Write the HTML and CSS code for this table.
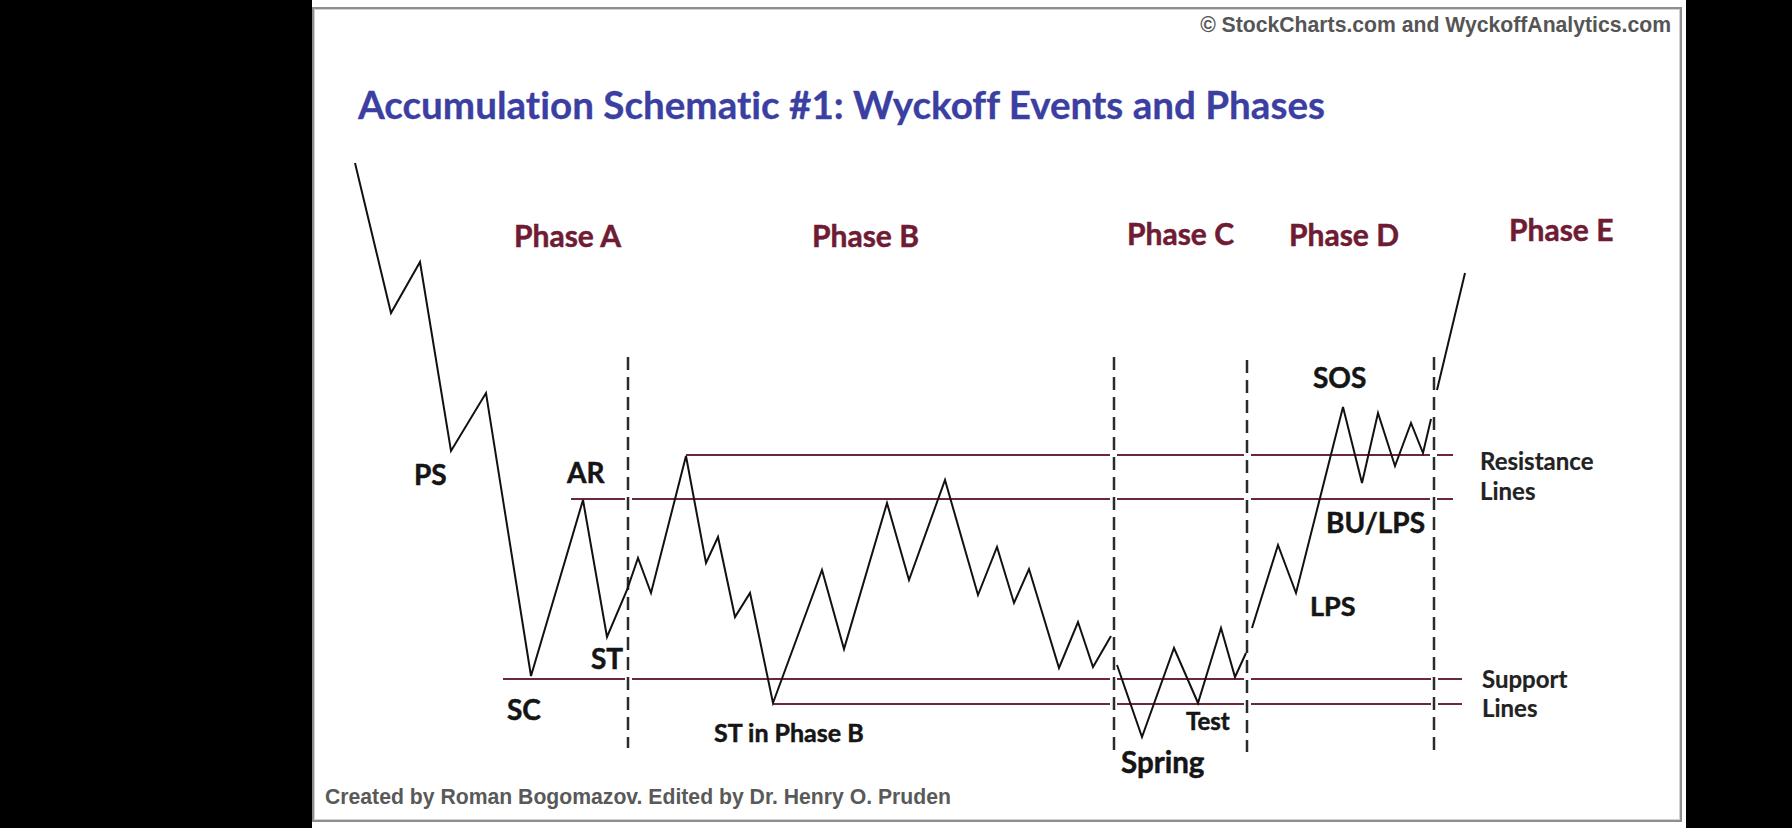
FILE: index.html
```html
<!DOCTYPE html>
<html lang="en">
<head>
<meta charset="utf-8">
<title>Accumulation Schematic #1</title>
<link rel="stylesheet" href="styles.css">
</head>
<body>
<div class="panel">
  <div class="frame">
    <div class="credit">© StockCharts.com and WyckoffAnalytics.com</div>
    <h1 class="title">Accumulation Schematic #1: Wyckoff Events and Phases</h1>
    <svg class="chart" viewBox="314 127 1366 658" width="1366" height="658" xmlns="http://www.w3.org/2000/svg">
      <g class="hline">
        <line x1="686" y1="455" x2="1110" y2="455"/>
        <line x1="1117" y1="455" x2="1244" y2="455"/>
        <line x1="1251" y1="455" x2="1430" y2="455"/>
        <line x1="1437" y1="455" x2="1453" y2="455"/>

        <line x1="571" y1="499" x2="625" y2="499"/>
        <line x1="632" y1="499" x2="1110" y2="499"/>
        <line x1="1117" y1="499" x2="1244" y2="499"/>
        <line x1="1251" y1="499" x2="1430" y2="499"/>
        <line x1="1437" y1="499" x2="1453" y2="499"/>

        <line x1="503" y1="679" x2="625" y2="679"/>
        <line x1="632" y1="679" x2="1110" y2="679"/>
        <line x1="1117" y1="679" x2="1244" y2="679"/>
        <line x1="1251" y1="679" x2="1431" y2="679"/>
        <line x1="1438" y1="679" x2="1462" y2="679"/>

        <line x1="773" y1="704" x2="1110" y2="704"/>
        <line x1="1117" y1="704" x2="1244" y2="704"/>
        <line x1="1251" y1="704" x2="1431" y2="704"/>
        <line x1="1438" y1="704" x2="1462" y2="704"/>
      </g>
      <g class="vline">
        <line x1="628" y1="357" x2="628" y2="748"/>
        <line x1="1114" y1="357" x2="1114" y2="750"/>
        <line x1="1247" y1="360" x2="1247" y2="752"/>
        <line x1="1434" y1="357" x2="1434" y2="754"/>
      </g>
      <g class="price">
        <polyline points="355,163 391,313 420,262 451,451 486,393 531,676 583,500 607,637 627,590 638,558 651,593 686,456 706,563 718,537 735,617 750,593 773,703 822,570 844,649 887,503 909,580 945,480 978,595 997,547 1014,603 1029,569 1059,668 1078,622 1093,667 1111,636"/>
        <polyline points="1117,665 1142,737 1174,648 1198,703 1221,628 1235,677 1246,653"/>
        <polyline points="1252,628 1278,545 1296,593 1343,407 1362,483 1378,413 1395,466 1411,423 1423,453 1431,419"/>
        <polyline points="1437,390 1465,273"/>
      </g>
      <g class="phase">
        <text x="514" y="247">Phase A</text>
        <text x="812" y="247">Phase B</text>
        <text x="1127" y="245">Phase C</text>
        <text x="1289" y="246">Phase D</text>
        <text x="1509" y="241">Phase E</text>
      </g>
      <g class="lbl">
        <text x="414" y="485">PS</text>
        <text x="567" y="483">AR</text>
        <text x="591" y="669">ST</text>
        <text x="507" y="720">SC</text>
        <text class="sm" x="714" y="742">ST in Phase B</text>
        <text class="lg" x="1121" y="773">Spring</text>
        <text class="xs" x="1186" y="730">Test</text>
        <text class="md" x="1310" y="616">LPS</text>
        <text x="1326" y="533">BU/LPS</text>
        <text x="1313" y="388">SOS</text>
      </g>
      <g class="side">
        <text x="1480" y="470">Resistance</text>
        <text x="1480" y="500">Lines</text>
        <text x="1482" y="688">Support</text>
        <text x="1482" y="717">Lines</text>
      </g>
    </svg>
    <div class="footer">Created by Roman Bogomazov. Edited by Dr. Henry O. Pruden</div>
  </div>
</div>
</body>
</html>
```

FILE: styles.css
```css
html, body {
  margin: 0;
  padding: 0;
  background: #000;
}

body {
  width: 1792px;
  height: 828px;
  overflow: hidden;
}

.panel {
  margin-left: 312px;
  width: 1374px;
  height: 828px;
  padding-top: 7px;
  box-sizing: border-box;
  background: #fff;
}

.frame {
  width: 1370px;
  height: 815px;
  box-sizing: border-box;
  border: 2px solid #8e8e8e;
  box-shadow: inset 0 0 0 1px #d2d2d2;
  display: flex;
  flex-direction: column;
}

.credit {
  margin-top: 4px;
  padding-right: 9px;
  height: 25px;
  text-align: right;
  font-family: "Liberation Sans", Arial, sans-serif;
  font-weight: bold;
  font-size: 21.2px;
  line-height: 24px;
  color: #555;
  white-space: nowrap;
}

.title {
  margin: 43px 0 0 44px;
  height: 46px;
  font-family: Lato, "Open Sans", sans-serif;
  font-weight: bold;
  font-size: 38.6px;
  line-height: 46px;
  color: #3b3fa2;
  white-space: nowrap;
  font-variant-ligatures: none;
  -webkit-text-stroke: 0.3px #3b3fa2;
}

.chart {
  display: block;
  flex: none;
}

.footer {
  padding-left: 11px;
  height: 24px;
  font-family: "Liberation Sans", Arial, sans-serif;
  font-weight: bold;
  font-size: 21.2px;
  line-height: 24px;
  color: #595959;
  white-space: nowrap;
}

.hline line {
  stroke: #6a2838;
  stroke-width: 2;
}

.vline line {
  stroke: #2b2b2b;
  stroke-width: 2.5;
  stroke-dasharray: 13 7;
}

.price polyline {
  fill: none;
  stroke: #111;
  stroke-width: 2;
  stroke-linejoin: miter;
}

.chart text {
  font-family: Lato, "Open Sans", sans-serif;
  font-weight: bold;
  font-variant-ligatures: none;
  paint-order: stroke;
  stroke-width: 0.5;
}

.phase text {
  font-size: 30px;
  fill: #6e1b33;
  stroke: #6e1b33;
}

.lbl text {
  font-size: 28px;
  fill: #151515;
  stroke: #151515;
}

.lbl text.lg {
  font-size: 29.5px;
}

.lbl text.md {
  font-size: 27px;
}

.lbl text.sm {
  font-size: 25px;
}

.lbl text.xs {
  font-size: 24px;
}

.side text {
  font-size: 24px;
  fill: #222;
  stroke: #222;
  stroke-width: 0.2;
}
```
